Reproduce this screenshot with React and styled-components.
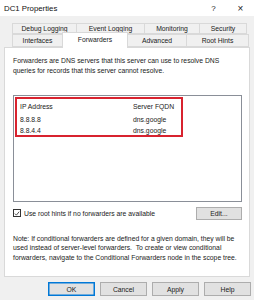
import React from "react";
import styled, { createGlobalStyle } from "styled-components";

const GlobalStyle = createGlobalStyle`
  html, body {
    margin: 0;
    padding: 0;
    background: #f0f0f0;
  }
  body {
    font-family: "Liberation Sans", Arial, sans-serif;
    font-size: 6.8px;
    color: #1a1a1a;
  }
`;

const Window = styled.div`
  width: 254px;
  height: 300px;
  background: #f0f0f0;
  display: flex;
  flex-direction: column;
  overflow: hidden;
`;

const TitleBar = styled.div`
  height: 16px;
  background: #ffffff;
  display: flex;
  align-items: center;
  padding-left: 4px;
  font-size: 7.8px;
  color: #111;
`;

const Title = styled.div`
  flex: 1;
`;

const TitleButton = styled.div`
  width: 27px;
  text-align: center;
  font-size: ${(p) => p.size || "8px"};
  font-weight: 300;
  color: #222;
`;

const Tabs = styled.div`
  margin: 8px 0 0 13px;
  display: flex;
  flex-direction: column;
`;

const TabRow = styled.div`
  display: flex;
  height: ${(p) => p.height}px;
  align-items: flex-end;
`;

const Tab = styled.div`
  width: ${(p) => p.width}px;
  height: ${(p) => (p.selected ? p.rowHeight + 3 : p.rowHeight)}px;
  margin-bottom: ${(p) => (p.selected ? "-1px" : "0")};
  box-sizing: border-box;
  border: 1px solid #d9d9d9;
  border-bottom: ${(p) => (p.selected ? "none" : "1px solid #d9d9d9")};
  margin-left: -1px;
  background: ${(p) => (p.selected ? "#ffffff" : "#f0f0f0")};
  display: flex;
  align-items: center;
  justify-content: center;
  padding-bottom: ${(p) => (p.selected ? "3px" : "0")};
  position: relative;
  z-index: ${(p) => (p.selected ? 2 : 1)};
  color: #1a1a1a;
  white-space: nowrap;
`;

const Panel = styled.div`
  margin: 0 4px;
  height: 230px;
  box-sizing: border-box;
  background: #ffffff;
  border: 1px solid #d9d9d9;
  padding: 8px 7px 0 8px;
  display: flex;
  flex-direction: column;
`;

const Paragraph = styled.p`
  margin: 0;
  line-height: 9.8px;
`;

const ListBox = styled.div`
  margin-top: 19px;
  height: 107px;
  box-sizing: border-box;
  border: 1px solid #8a8f98;
  background: #ffffff;
  padding: 1px;
`;

const Highlight = styled.div`
  width: 168px;
  height: 40px;
  box-sizing: border-box;
  border: 2px solid #d8232f;
  padding: 2px 0 0 3px;
`;

const ListRow = styled.div`
  display: grid;
  grid-template-columns: 113px 1fr;
  height: ${(p) => p.height}px;
  align-items: center;
`;

const HeaderGap = styled.div`
  height: 2px;
`;

const OptionRow = styled.div`
  display: flex;
  align-items: center;
  margin-top: 5px;
  height: 13px;
`;

const CheckLabel = styled.label`
  display: flex;
  align-items: center;
  gap: 3px;
  flex: 1;
`;

const CheckBox = styled.span`
  width: 8px;
  height: 8px;
  box-sizing: border-box;
  border: 1px solid #333;
  background: #fff;
  display: flex;
  align-items: center;
  justify-content: center;
`;

const Button = styled.div`
  width: ${(p) => p.width || 47}px;
  height: ${(p) => p.height || 14}px;
  box-sizing: border-box;
  background: #e1e1e1;
  border: 1px solid ${(p) => (p.primary ? "#0078d7" : "#adadad")};
  box-shadow: ${(p) => (p.primary ? "inset 0 0 0 0.5px #0078d7" : "none")};
  display: flex;
  align-items: center;
  justify-content: center;
  color: #1a1a1a;
`;

const Note = styled(Paragraph)`
  margin-top: 14px;
  line-height: 9.5px;
`;

const Footer = styled.div`
  display: flex;
  justify-content: flex-end;
  gap: 5px;
  padding: 5px 3px 0 0;
`;

const row1 = [
  ["Debug Logging", 65],
  ["Event Logging", 69],
  ["Monitoring", 56],
  ["Security", 48],
];

const row2 = [
  ["Interfaces", 51],
  ["Forwarders", 66],
  ["Advanced", 60],
  ["Root Hints", 63],
];

const forwarders = [
  ["8.8.8.8", "dns.google"],
  ["8.8.4.4", "dns.google"],
];

export default function App() {
  return (
    <>
      <GlobalStyle />
      <Window>
        <TitleBar>
          <Title>DC1 Properties</Title>
          <TitleButton>?</TitleButton>
          <TitleButton size="10px">×</TitleButton>
        </TitleBar>

        <Tabs>
          <TabRow height={10}>
            {row1.map(([name, w]) => (
              <Tab key={name} width={w} rowHeight={11}>
                {name}
              </Tab>
            ))}
          </TabRow>
          <TabRow height={13}>
            {row2.map(([name, w]) => (
              <Tab
                key={name}
                width={w}
                rowHeight={13}
                selected={name === "Forwarders"}
              >
                {name}
              </Tab>
            ))}
          </TabRow>
        </Tabs>

        <Panel>
          <Paragraph>
            Forwarders are DNS servers that this server can use to resolve DNS
            queries for records that this server cannot resolve.
          </Paragraph>

          <ListBox>
            <Highlight>
              <ListRow height={12}>
                <span>IP Address</span>
                <span>Server FQDN</span>
              </ListRow>
              <HeaderGap />
              {forwarders.map(([ip, fqdn]) => (
                <ListRow key={ip} height={10.5}>
                  <span>{ip}</span>
                  <span>{fqdn}</span>
                </ListRow>
              ))}
            </Highlight>
          </ListBox>

          <OptionRow>
            <CheckLabel>
              <CheckBox>
                <svg width="7" height="7" viewBox="0 0 7 7">
                  <path
                    d="M1 3.6 L2.8 5.4 L6 1.4"
                    fill="none"
                    stroke="#222"
                    strokeWidth="0.9"
                  />
                </svg>
              </CheckBox>
              Use root hints if no forwarders are available
            </CheckLabel>
            <Button width={46} height={13}>
              Edit...
            </Button>
          </OptionRow>

          <Note>
            Note: If conditional forwarders are defined for a given domain,
            they will be used instead of server-level forwarders.&nbsp; To
            create or view conditional forwarders, navigate to the Conditional
            Forwarders node in the scope tree.
          </Note>
        </Panel>

        <Footer>
          <Button primary>OK</Button>
          <Button>Cancel</Button>
          <Button>Apply</Button>
          <Button>Help</Button>
        </Footer>
      </Window>
    </>
  );
}
